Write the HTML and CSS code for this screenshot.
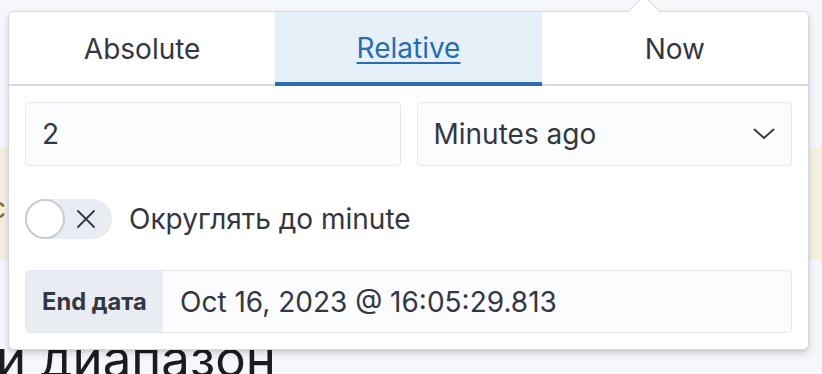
FILE: index.html
```html
<!DOCTYPE html>
<html lang="ru">
<head>
<meta charset="utf-8">
<link rel="stylesheet" href="styles.css">
</head>
<body>
<div class="page">
  <div class="band"><span class="band-text">с</span></div>
  <h1 class="title">и диапазон</h1>

  <div class="popover">
    <div class="arrow"></div>
    <div class="tabs">
      <div class="tab">Absolute</div>
      <div class="tab tab-active"><span>Relative</span></div>
      <div class="tab">Now</div>
    </div>
    <div class="body">
      <div class="row">
        <div class="field">2</div>
        <div class="field select">
          <span>Minutes ago</span>
          <svg class="chevron" width="22" height="12" viewBox="0 0 22 12"><path d="M1.5 1.5 L11 10 L20.5 1.5" fill="none" stroke="#343741" stroke-width="1.8" stroke-linecap="round" stroke-linejoin="round"/></svg>
        </div>
      </div>
      <div class="toggle-row">
        <div class="switch">
          <div class="knob"></div>
          <svg class="cross" width="20" height="20" viewBox="0 0 20 20"><path d="M2 2 L18 18 M18 2 L2 18" stroke="#343741" stroke-width="1.8" stroke-linecap="round"/></svg>
        </div>
        <span class="toggle-label">Округлять до minute</span>
      </div>
      <div class="end">
        <div class="prepend">End дата</div>
        <div class="end-value">Oct 16, 2023 @ 16:05:29.813</div>
      </div>
    </div>
  </div>
</div>
</body>
</html>
```
FILE: styles.css
```css
* { box-sizing: border-box; }
html, body { margin: 0; padding: 0; }
body {
  background: #f5f7fa;
  font-family: Inter, "Noto Sans", sans-serif;
  color: #343741;
  overflow: hidden;
  width: 822px;
  height: 374px;
}
.page {
  position: relative;
  width: 822px;
  height: 374px;
  padding-top: 147px;
  overflow: hidden;
}
.band {
  height: 113px;
  background: #f6f0e3;
  display: flex;
  align-items: center;
}
.band-text {
  color: #8a6a1e;
  font-size: 28px;
  margin-left: -10px;
  margin-top: 8px;
}
.title {
  margin: 73px 0 0 -4px;
  font-weight: 400;
  font-size: 51px;
  line-height: 1;
  color: #1a1c21;
  white-space: nowrap;
}
.popover {
  position: absolute;
  left: 8px;
  top: 11px;
  width: 801px;
  height: 339px;
  background: #fff;
  border: 1px solid #d3dae6;
  border-radius: 6px;
  box-shadow: 0 4px 8px rgba(0,0,0,0.12), 0 2px 3px rgba(0,0,0,0.08);
}
.arrow {
  position: absolute;
  top: -12px;
  left: 623px;
  width: 24px;
  height: 24px;
  background: #fff;
  border-top: 1px solid #d3dae6;
  border-left: 1px solid #d3dae6;
  transform: rotate(45deg);
}
.tabs {
  position: relative;
  display: flex;
  height: 74px;
  border-bottom: 2px solid #d3dae6;
  border-radius: 6px 6px 0 0;
}
.tab {
  flex: 1;
  display: flex;
  align-items: center;
  justify-content: center;
  font-size: 28px;
  padding-top: 2px;
  color: #343741;
}
.tab-active {
  background: #e6f0f8;
  color: #2a6cb2;
  border-bottom: 4px solid #2a6cb2;
  margin-bottom: -2px;
}
.tab-active span { text-decoration: underline; text-underline-offset: 4px; text-decoration-thickness: 2px; }
.body {
  padding: 16px;
}
.row {
  display: flex;
  gap: 16px;
}
.field {
  flex: 1;
  height: 64px;
  background: #fbfcfd;
  border: 1.5px solid #e3e7ef;
  border-radius: 4px;
  display: flex;
  align-items: center;
  padding: 0 16px;
  font-size: 28px;
}
.select { justify-content: space-between; }
.toggle-row {
  display: flex;
  align-items: center;
  margin-top: 32px;
  height: 42px;
}
.switch {
  position: relative;
  width: 87px;
  height: 40px;
  border-radius: 20px;
  background: #e9edf3;
  display: flex;
  align-items: center;
  justify-content: flex-end;
  padding-right: 16px;
}
.knob {
  position: absolute;
  left: 0;
  top: 0;
  width: 40px;
  height: 40px;
  border-radius: 50%;
  background: #fff;
  border: 2px solid #c9ccd2;
}
.toggle-label {
  margin-left: 17px;
  font-size: 28px;
}
.end {
  margin-top: 30px;
  display: flex;
  height: 63px;
  border: 1.5px solid #e3e7ef;
  border-radius: 4px;
  background: #fbfcfd;
  overflow: hidden;
}
.prepend {
  width: 137px;
  background: #e9edf3;
  display: flex;
  align-items: center;
  justify-content: center;
  font-weight: 700;
  font-size: 23.7px;
}
.end-value {
  display: flex;
  align-items: center;
  padding-left: 17px;
  font-size: 28px;
}
```
